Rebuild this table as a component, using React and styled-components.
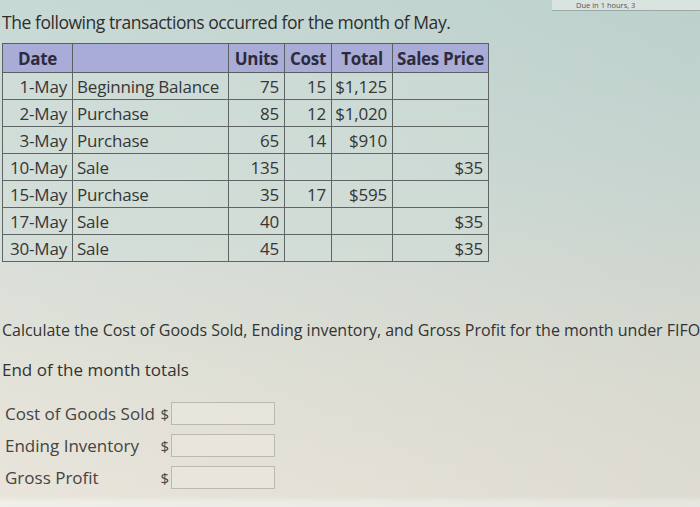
import React from "react";
import styled, { createGlobalStyle } from "styled-components";

const Global = createGlobalStyle`
  html, body { margin: 0; padding: 0; }
  body { font-family: "Open Sans", "Noto Sans", sans-serif; color: #333; }
`;

const Page = styled.div`
  width: 700px;
  height: 507px;
  overflow: hidden;
  display: flex;
  flex-direction: column;
  background:
    linear-gradient(to right, rgba(255,255,255,0.06), rgba(0,40,40,0.04)),
    linear-gradient(to bottom, #c4d7d3 0%, #cddbd6 30%, #d9ded6 55%, #e3e1d7 80%, #e7e3d9 98%, #f0eee8 99%);
`;

const TopStrip = styled.div`
  height: 10px;
  display: flex;
  justify-content: flex-end;
`;

const Due = styled.div`
  width: 124px;
  height: 9px;
  padding-top: 1px;
  background: #d9e3e0;
  border-bottom: 1px solid #9aa8a6;
  font-size: 7.5px;
  line-height: 8px;
  color: #555;
  white-space: nowrap;
  padding-left: 24px;
  box-sizing: content-box;
`;

const Title = styled.h1`
  margin: 0 0 0 2px;
  font-size: 17.5px;
  font-weight: 500;
  line-height: 24px;
  letter-spacing: -0.45px;
  color: #2e2e2e;
  white-space: nowrap;
`;

const Table = styled.table`
  margin: 9px 0 0 2px;
  width: 487px;
  border-collapse: collapse;
  table-layout: fixed;
  font-size: 17px;
  color: #363636;
  border: 1px solid #5a5f60;
`;

const Th = styled.th`
  height: 28px;
  padding: 0;
  background: #a9acd7;
  border: 1px solid #5a5f60;
  font-weight: 700;
  color: #2d2b3c;
  text-align: center;
  letter-spacing: -0.3px;
  white-space: nowrap;
`;

const Td = styled.td`
  height: 26px;
  padding: 0 ${p => (p.$align === "left" ? 0 : 5)}px 0 ${p => (p.$align === "left" ? 4 : 0)}px;
  border: 1px solid #5f6565;
  text-align: ${p => p.$align || "right"};
  white-space: nowrap;
  letter-spacing: -0.2px;
  background: rgba(210, 222, 216, 0.5);
`;

const Question = styled.p`
  margin: 57px 0 0 2px;
  font-size: 16px;
  line-height: 22px;
  white-space: nowrap;
  letter-spacing: -0.02px;
  color: #333;
`;

const Sub = styled.p`
  margin: 18px 0 0 2px;
  font-size: 17px;
  line-height: 22px;
  color: #333;
`;

const Form = styled.div`
  margin: 21px 0 0 5px;
  display: grid;
  grid-template-columns: 152px 14px 104px;
  row-gap: 9px;
  align-items: center;
`;

const Label = styled.span`
  font-size: 17px;
  line-height: 22px;
  color: #444;
  white-space: nowrap;
`;

const Dollar = styled.span`
  font-size: 15px;
  color: #444;
  text-align: right;
  padding-right: 2px;
`;

const Box = styled.input`
  box-sizing: border-box;
  width: 104px;
  height: 23px;
  margin: 0;
  border: 1px solid #b9b9b1;
  background: #e8e6dc;
  font: inherit;
`;

const cols = [70, 156, 56, 47, 61, 96];

const rows = [
  ["1-May", "Beginning Balance", "75", "15", "$1,125", ""],
  ["2-May", "Purchase", "85", "12", "$1,020", ""],
  ["3-May", "Purchase", "65", "14", "$910", ""],
  ["10-May", "Sale", "135", "", "", "$35"],
  ["15-May", "Purchase", "35", "17", "$595", ""],
  ["17-May", "Sale", "40", "", "", "$35"],
  ["30-May", "Sale", "45", "", "", "$35"],
];

const fields = [
  ["Cost of Goods Sold", "cogs"],
  ["Ending Inventory", "ei"],
  ["Gross Profit", "gp"],
];

export default function App() {
  return (
    <Page>
      <Global />
      <TopStrip>
        <Due>Due in 1 hours, 3</Due>
      </TopStrip>
      <Title>The following transactions occurred for the month of May.</Title>
      <Table>
        <colgroup>
          {cols.map((w, i) => (
            <col key={i} style={{ width: w }} />
          ))}
        </colgroup>
        <thead>
          <tr>
            <Th>Date</Th>
            <Th></Th>
            <Th>Units</Th>
            <Th>Cost</Th>
            <Th>Total</Th>
            <Th>Sales Price</Th>
          </tr>
        </thead>
        <tbody>
          {rows.map((r, i) => (
            <tr key={i}>
              <Td>{r[0]}</Td>
              <Td $align="left">{r[1]}</Td>
              <Td>{r[2]}</Td>
              <Td>{r[3]}</Td>
              <Td>{r[4]}</Td>
              <Td>{r[5]}</Td>
            </tr>
          ))}
        </tbody>
      </Table>
      <Question>
        Calculate the Cost of Goods Sold, Ending inventory, and Gross Profit for the month under FIFO
      </Question>
      <Sub>End of the month totals</Sub>
      <Form>
        {fields.map(([label, id]) => (
          <React.Fragment key={id}>
            <Label>{label}</Label>
            <Dollar>$</Dollar>
            <Box aria-label={label} />
          </React.Fragment>
        ))}
      </Form>
    </Page>
  );
}
